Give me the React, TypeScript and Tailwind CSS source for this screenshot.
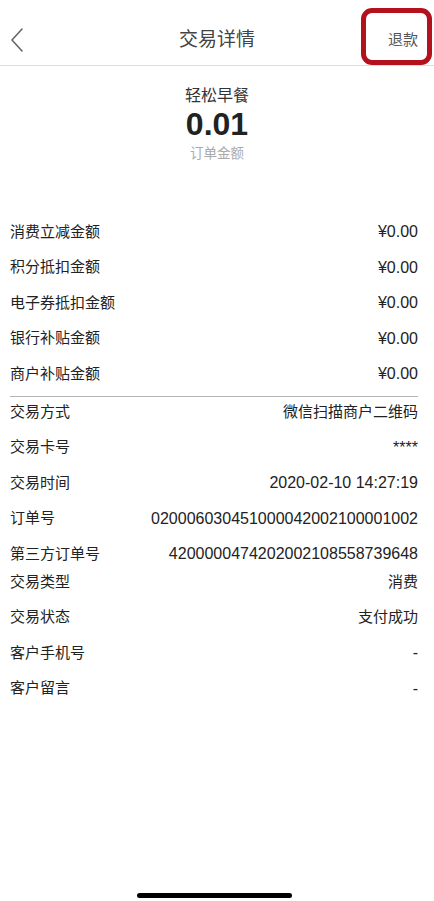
type Row = { label: string; value: string; num?: boolean; tight?: boolean };

const discounts: Row[] = [
  { label: "消费立减金额", value: "¥0.00", num: true },
  { label: "积分抵扣金额", value: "¥0.00", num: true },
  { label: "电子券抵扣金额", value: "¥0.00", num: true },
  { label: "银行补贴金额", value: "¥0.00", num: true },
  { label: "商户补贴金额", value: "¥0.00", num: true },
];

const details: Row[] = [
  { label: "交易方式", value: "微信扫描商户二维码" },
  { label: "交易卡号", value: "****", num: true },
  { label: "交易时间", value: "2020-02-10 14:27:19", num: true },
  { label: "订单号", value: "020006030451000042002100001002", num: true },
  { label: "第三方订单号", value: "4200000474202002108558739648", num: true, tight: true },
  { label: "交易类型", value: "消费" },
  { label: "交易状态", value: "支付成功" },
  { label: "客户手机号", value: "-", num: true },
  { label: "客户留言", value: "-", num: true },
];

function InfoRow({ row }: { row: Row }) {
  return (
    <div
      className={`flex items-center justify-between h-[20px] ${
        row.tight ? "mb-[-7.5px]" : ""
      }`}
    >
      <span className="text-[15px] text-[#222]">{row.label}</span>
      <span className={row.num ? "text-[16px] text-[#222]" : "text-[15px] text-[#222]"}>
        {row.value}
      </span>
    </div>
  );
}

export default function App() {
  return (
    <div
      className="relative w-[434px] h-[901px] bg-white overflow-hidden"
      style={{ fontFamily: '"Liberation Sans", "Noto Sans CJK SC", sans-serif' }}
    >
      {/* header */}
      <div className="relative h-[66px] border-b border-[#dcdcdc] flex items-start justify-center">
        <svg
          className="absolute left-[9px] top-[27px]"
          width="16"
          height="26"
          viewBox="0 0 16 26"
          fill="none"
        >
          <path d="M13 2 L3 13 L13 24" stroke="#666" strokeWidth="1.6" strokeLinecap="round" strokeLinejoin="round" />
        </svg>
        <span className="mt-[26px] text-[19px] text-[#444] leading-[28px]">交易详情</span>
        <span className="absolute right-[16px] top-[29px] text-[15px] text-[#555] leading-[22px]">退款</span>
      </div>

      {/* annotation box */}
      <div className="absolute left-[361px] top-[8px] w-[71px] h-[57px] rounded-[11px] border-[5px] border-[#b3121c]" />

      {/* summary */}
      <div className="flex flex-col items-center mt-[20px]">
        <span className="text-[16px] leading-[20px] text-[#333]">轻松早餐</span>
        <span className="text-[32px] leading-[36px] font-bold text-[#222]">0.01</span>
        <span className="mt-[3px] text-[13.5px] leading-[18px] text-[#aaa]">订单金额</span>
      </div>

      {/* rows */}
      <div className="mt-[59px] pl-[10px] pr-[16px]">
        <div className="flex flex-col gap-[15.5px]">
          {discounts.map((r) => (
            <InfoRow key={r.label} row={r} />
          ))}
        </div>
        <div className="mt-[12px] mb-[5px] h-px bg-[#b5b5b5]" />
        <div className="flex flex-col gap-[15.5px]">
          {details.map((r) => (
            <InfoRow key={r.label} row={r} />
          ))}
        </div>
      </div>

      {/* home indicator */}
      <div className="absolute left-[137px] top-[893px] w-[155px] h-[5px] rounded-full bg-black" />
    </div>
  );
}
